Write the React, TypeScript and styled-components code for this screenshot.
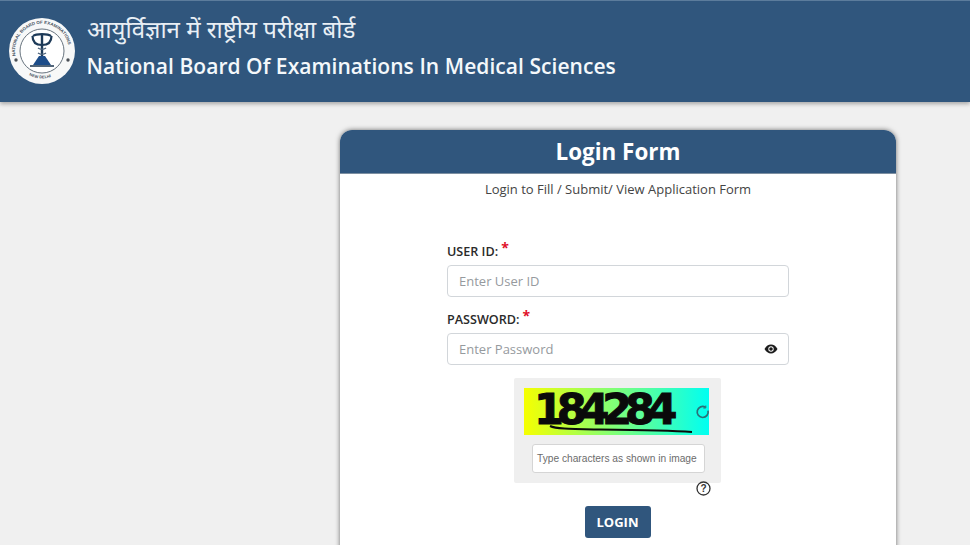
import React from "react";
import styled, { createGlobalStyle } from "styled-components";

const Global = createGlobalStyle`
  html, body { margin: 0; padding: 0; height: 545px; overflow: hidden; background: #f0f0f0; }
  body { font-family: "Open Sans", "Noto Sans", sans-serif; }
  * { box-sizing: border-box; }
`;
const Page = styled.div`width: 970px; height: 545px; overflow: hidden; background: #f0f0f0;`;
const Header = styled.header`
  height: 102px; background: #30567d; border-top: 1px solid #5c7c9c;
  box-shadow: 0 2px 4px rgba(0,0,0,.3);
  display: flex; align-items: flex-start; padding: 17px 0 0 9px; gap: 12px;
`;
const Titles = styled.div`display: flex; flex-direction: column; color: #fff; margin-top: 1px;`;
const Hindi = styled.div`
  font-family: "Noto Sans", "Noto Sans Devanagari", "Lohit Devanagari", "DejaVu Sans", sans-serif;
  font-size: 24px; line-height: 24px; height: 24px; margin-top: -2px; color: #e9eff5; white-space: nowrap;
`;
const English = styled.div`
  font-size: 21px; line-height: 28px; font-weight: 600; margin: 11px 0 0 -.5px; white-space: nowrap; letter-spacing: .05px; color: #f4f8fb;
`;
const Main = styled.main`padding: 28px 0 0 340px;`;
const Card = styled.section`
  width: 556px; height: 480px; background: #fff; border-radius: 12px 12px 0 0;
  box-shadow: 0 0 5px rgba(0,0,0,.55);
`;
const CardHead = styled.div`
  height: 44px; background: #30567d; color: #fff; border-radius: 12px 12px 0 0;
  border-bottom: 1px solid #7d8fa1;
  font-size: 22.4px; font-weight: 700; line-height: 44px; text-align: center;
`;
const Sub = styled.p`margin: 6px 0 0; font-size: 13px; line-height: 18px; color: #444; text-align: center;`;
const Form = styled.form`width: 342px; margin: 44px auto 0 107px; display: flex; flex-direction: column;`;
const Label = styled.label`
  font-size: 12.6px; font-weight: 600; line-height: 18px; color: #2a2a2a; height: 23px; display: block;
`;
const Star = styled.span`color: #e0102a; font-size: 14px; font-weight: 700; position: relative; top: -3px; margin-left: 3px;`;
const Field = styled.div`
  height: 32px; border: 1px solid #d2d6da; border-radius: 4px; background: #fff;
  display: flex; align-items: center; justify-content: space-between; padding: 0 10px 0 11px;
  margin-bottom: 13px; font-size: 13px; color: #969a9e;
`;
const CaptchaBox = styled.div`
  width: 207px; height: 105px; margin: 0 0 0 67px; background: #efefef; border-radius: 2px;
  padding: 10px 0 0 10px; display: flex; flex-direction: column;
`;
const CaptchaSvg = styled.svg`display: block; overflow: visible; flex: none;`;
const CaptchaInput = styled.div`
  width: 173px; height: 29px; margin: 9px 0 0 8px; background: #fff; border: 1px solid #d5d5d5; border-radius: 3px;
  font-family: "Liberation Sans", Arial, sans-serif; font-size: 10.2px; line-height: 27px; color: #6c6c6c; padding-left: 4px; white-space: nowrap;
`;
const HelpRow = styled.div`display: flex; justify-content: flex-end; padding-right: 78px; margin-top: -2px; height: 17px;`;
const LoginRow = styled.div`display: flex; justify-content: center; margin-top: 8px; padding-right: 1px;`;
const LoginButton = styled.button`
  width: 66px; height: 32px; border: 0; border-radius: 3px; background: #30567d; color: #fff;
  font-family: inherit; font-size: 13px; font-weight: 700; padding: 0;
`;

const Logo = () => (
  <svg width="66" height="66" viewBox="0 0 66 66">
    <defs>
      <path id="ringTop" d="M6.500 38a27 27 0 1 1 53 0" />
      <path id="ringBottom" d="M14 53a28 28 0 0 0 38 0" />
    </defs>
    <circle cx="33" cy="33" r="33" fill="#f7f8f8" />
    <circle cx="33" cy="33" r="22" fill="#fff" stroke="#56636f" strokeWidth=".9" />
    <text fontFamily="Liberation Sans, sans-serif" fontSize="4.300" fontWeight="700" fill="#46525f">
      <textPath href="#ringTop" textLength="84" lengthAdjust="spacingAndGlyphs">NATIONAL BOARD OF EXAMINATIONS</textPath>
    </text>
    <text fontFamily="Liberation Sans, sans-serif" fontSize="4" fontWeight="700" fill="#46525f">
      <textPath href="#ringBottom" startOffset="18%">NEW DELHI</textPath>
    </text>
    <circle cx="7" cy="42" r="1.700" fill="#4a4f55" />
    <circle cx="59" cy="42" r="1.700" fill="#4a4f55" />
    <path d="M23.500 18c0 7 4.500 9 9.500 9s9.500-2 9.500-9" fill="none" stroke="#1d3a58" strokeWidth="2.200" />
    <path d="M24 18c3-2.400 15-2.400 18 0" fill="none" stroke="#1d3a58" strokeWidth="2.200" />
    <path d="M33 16v23" stroke="#1d3a58" strokeWidth="2.400" />
    <path d="M29 30c3 2 5 2 8 0M29 35c3 2 5 2 8 0" fill="none" stroke="#4a6079" strokeWidth="1.500" />
    <path d="M24 47l6-9h6l6 9z" fill="#1d4d8a" />
    <path d="M21 48h24" stroke="#17324d" strokeWidth="1.500" />
  </svg>
);

const Captcha = () => (
  <CaptchaSvg width="185" height="47" viewBox="0 0 185 47">
    <defs>
      <linearGradient id="cg" x1="0" x2="1" y1="0" y2="0">
        <stop offset="0" stopColor="#f6ff00" />
        <stop offset=".5" stopColor="#7dff7a" />
        <stop offset="1" stopColor="#00fff2" />
      </linearGradient>
    </defs>
    <rect width="185" height="47" fill="url(#cg)" />
    <text x="10" y="36" fontFamily="DejaVu Sans, Liberation Sans, sans-serif" fontWeight="700" fontSize="43" letterSpacing="-7.200" fill="#0a0a0a" stroke="#0a0a0a" strokeWidth="1">184284</text>
    <path d="M26 38c6 3 20 3 50 3.500 40 .5 70 1 92 2.500" fill="none" stroke="#0a0a0a" strokeWidth="2" />
    <path d="M184 22.600A5.500 5.500 0 1 1 181.450 19.240" fill="none" stroke="#2b7077" strokeWidth="1.700" />
    <path d="M181.800 17.500v2.500h-2.500" fill="none" stroke="#2b7077" strokeWidth="1" />
  </CaptchaSvg>
);

const Eye = () => (
  <svg width="14" height="10" viewBox="0 0 14 10">
    <path d="M0.500 5C2.200 2 4.400 .6 7 .6S11.800 2 13.500 5C11.800 8 9.600 9.400 7 9.400S2.200 8 .5 5z" fill="#1c1c1c" />
    <circle cx="7" cy="5" r="2.700" fill="#fff" />
    <circle cx="7" cy="5" r="1.800" fill="#1c1c1c" />
  </svg>
);

const Help = () => (
  <svg width="15" height="15" viewBox="0 0 15 15">
    <circle cx="7.500" cy="7.500" r="6.500" fill="#fff" stroke="#333" strokeWidth="1.300" />
    <text x="7.500" y="11" textAnchor="middle" fontFamily="Liberation Sans, sans-serif" fontSize="10" fontWeight="700" fill="#333">?</text>
  </svg>
);

export default function App() {
  return (
    <Page>
      <Global />
      <Header>
        <Logo />
        <Titles>
          <Hindi>आयुर्विज्ञान में राष्ट्रीय परीक्षा बोर्ड</Hindi>
          <English>National Board Of Examinations In Medical Sciences</English>
        </Titles>
      </Header>
      <Main>
        <Card>
          <CardHead>Login Form</CardHead>
          <Sub>Login to Fill / Submit/ View Application Form</Sub>
          <Form>
            <Label>USER ID:<Star>*</Star></Label>
            <Field>Enter User ID</Field>
            <Label>PASSWORD:<Star>*</Star></Label>
            <Field>Enter Password<Eye /></Field>
            <CaptchaBox>
              <Captcha />
              <CaptchaInput>Type characters as shown in image</CaptchaInput>
            </CaptchaBox>
            <HelpRow><Help /></HelpRow>
            <LoginRow><LoginButton type="button">LOGIN</LoginButton></LoginRow>
          </Form>
        </Card>
      </Main>
    </Page>
  );
}
